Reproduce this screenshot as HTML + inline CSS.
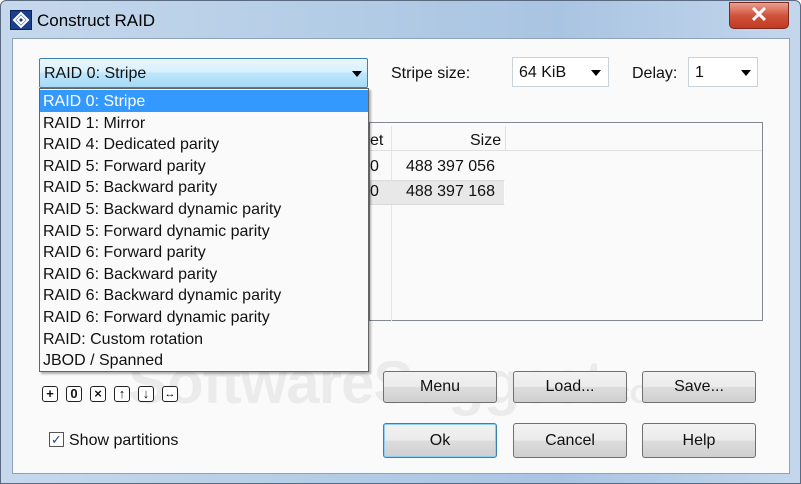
<!DOCTYPE html>
<html><head><meta charset="utf-8"><style>
*{box-sizing:border-box;margin:0;padding:0}
body{width:801px;height:484px;overflow:hidden;font-family:"Liberation Sans",sans-serif;font-size:16px;color:#111;background:#fff;position:relative}
.frame{position:absolute;left:0;top:0;width:801px;height:484px;background:linear-gradient(90deg,#c6d8ec,#b4cde6 40%,#a9c4e2 70%,#c3d6ec);border:1px solid #5a6a80;border-radius:6px 6px 0 0}
.client{position:absolute;left:12px;top:38px;width:778px;height:436px;background:#fafafa;border:1px solid #8ea3bb}
.abs{position:absolute}
.title{left:37px;top:11px;font-size:17px;color:#000}
.icon{left:10px;top:10px;width:22px;height:20px;background:#1d3f8a;border:1px solid #0b2260}
.close{left:729px;top:2px;width:60px;height:27px;border-radius:0 0 5px 5px;background:linear-gradient(#e8a090,#d0533c 50%,#c23a22);border:1px solid #7a2a20;color:#fff;font-size:22px;text-align:center;line-height:24px;font-weight:bold}
.combo{left:39px;top:58px;width:329px;height:30px;border:1px solid #3c7fb1;border-radius:2px;background:linear-gradient(#eaf6fd,#d9f0fc 45%,#bee6fd 50%,#a7d9f5);padding:6px 4px}
.arrow{width:0;height:0;border-left:5px solid transparent;border-right:5px solid transparent;border-top:6px solid #000}
.list{left:39px;top:88px;width:330px;height:284px;background:#fafafa;border:1px solid #646464;box-shadow:2px 2px 2px rgba(0,0,0,.3);padding-top:1px}
.list div{height:21.6px;line-height:23px;padding-left:3px}
.list .sel{background:#3399ff;color:#fff}
.sel2{border:1px solid #c9d3dc;background:#fff;height:30px;padding:6px 6px}
.table{left:369px;top:122px;width:394px;height:199px;border:1px solid #828790;background:#fafafa}
.btn{position:absolute;width:114px;height:32px;border:1px solid #707070;border-radius:3px;background:linear-gradient(#f2f2f2,#ebebeb 50%,#dddddd 50%,#cfcfcf);text-align:center;line-height:30px;font-size:16px}
.sm{position:absolute;top:386px;width:16px;height:16px;border:1px solid #222;border-radius:3px;font-size:13px;line-height:14px;text-align:center;font-weight:bold;background:#fff}
.wm{left:128px;top:348px;font-size:60px;font-weight:bold;color:rgba(0,0,0,.06);letter-spacing:-1px}
</style></head><body>
<div class="frame"></div>
<div class="abs icon"><svg width="20" height="18" viewBox="0 0 20 18"><path d="M10 2 L17 9 L10 16 L3 9 Z M10 5.5 L13.5 9 L10 12.5 L6.5 9Z" fill="none" stroke="#fff" stroke-width="2"/></svg></div>
<div class="abs title">Construct RAID</div>
<div class="abs close">✕</div>
<div class="client"></div>
<div class="abs combo">RAID 0: Stripe<div class="arrow abs" style="left:312px;top:12px"></div></div>
<div class="abs" style="left:391px;top:65px">Stripe size:</div>
<div class="abs sel2" style="left:512px;top:57px;width:97px">64 KiB<div class="arrow abs" style="left:78px;top:12px"></div></div>
<div class="abs" style="left:632px;top:65px">Delay:</div>
<div class="abs sel2" style="left:688px;top:57px;width:70px">1<div class="arrow abs" style="left:52px;top:12px"></div></div>
<div class="abs table">
 <div class="abs" style="left:0;top:3px;width:392px;height:25px;border-bottom:1px solid #e0e0e0"></div>
 <div class="abs" style="left:0;top:9px">et</div>
 <div class="abs" style="left:21px;top:3px;width:1px;height:195px;background:#e5e5e5"></div>
 <div class="abs" style="left:135px;top:3px;width:1px;height:25px;background:#e0e0e0"></div>
 <div class="abs" style="left:100px;top:9px">Size</div>
 <div class="abs" style="left:0;top:35px">0</div>
 <div class="abs" style="left:36px;top:35px">488 397 056</div>
 <div class="abs" style="left:0;top:57px;width:135px;height:25px;background:#e8e8e8;border:1px solid #dadada;border-right-color:#fff"></div>
 <div class="abs" style="left:0;top:60px">0</div>
 <div class="abs" style="left:36px;top:60px">488 397 168</div>
</div>
<div class="abs wm">SoftwareSuggest<span style="font-size:34px">.com</span></div>
<div class="abs list">
<div class="sel">RAID 0: Stripe</div><div>RAID 1: Mirror</div><div>RAID 4: Dedicated parity</div><div>RAID 5: Forward parity</div><div>RAID 5: Backward parity</div><div>RAID 5: Backward dynamic parity</div><div>RAID 5: Forward dynamic parity</div><div>RAID 6: Forward parity</div><div>RAID 6: Backward parity</div><div>RAID 6: Backward dynamic parity</div><div>RAID 6: Forward dynamic parity</div><div>RAID: Custom rotation</div><div>JBOD / Spanned</div>
</div>
<div class="sm" style="left:42px">+</div><div class="sm" style="left:66px">0</div><div class="sm" style="left:90px">×</div><div class="sm" style="left:114px">↑</div><div class="sm" style="left:138px">↓</div><div class="sm" style="left:162px;font-size:11px">↔</div>
<div class="abs" style="left:49px;top:432px;width:15px;height:15px;border:1px solid #555;background:#fff;color:#2a3f9a;font-size:13px;line-height:13px;text-align:center">✓</div>
<div class="abs" style="left:69px;top:432px">Show partitions</div>
<div class="btn" style="left:383px;top:371px">Menu</div>
<div class="btn" style="left:513px;top:371px">Load...</div>
<div class="btn" style="left:642px;top:371px">Save...</div>
<div class="btn" style="left:383px;top:423px;height:35px;line-height:33px;border-color:#3c7fb1;box-shadow:inset 0 0 0 1px #8ed0f5">Ok</div>
<div class="btn" style="left:513px;top:423px;height:35px;line-height:33px">Cancel</div>
<div class="btn" style="left:642px;top:423px;height:35px;line-height:33px">Help</div>
</body></html>
